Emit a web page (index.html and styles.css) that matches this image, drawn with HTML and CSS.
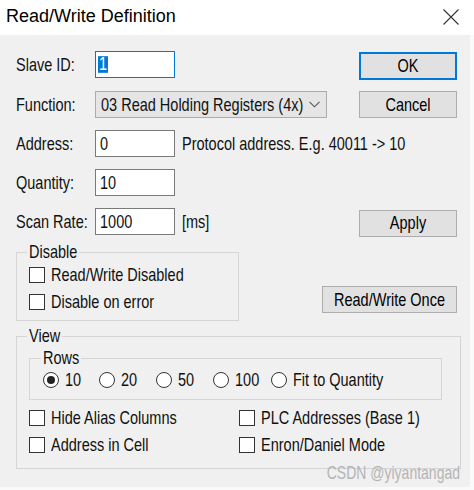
FILE: index.html
```html
<!DOCTYPE html>
<html lang="en">

<head>
    <meta charset="UTF-8">
    <title>Read/Write Definition</title>
    <link rel="stylesheet" href="styles.css">
</head>

<body>
    <div class="titlebar">
        <span class="title">Read/Write Definition</span>
        <svg class="close" width="16" height="16" viewBox="0 0 16 16">
            <path d="M0.5 0.5 L15.5 15.5 M15.5 0.5 L0.5 15.5" stroke="#333" stroke-width="1.1" fill="none" />
        </svg>
    </div>

    <div class="dialog">
        <div class="row first">
            <span class="lbl"><span class="t">Slave ID:</span></span>
            <div class="edit focus"><span class="selected t">1</span></div>
            <button class="btn default"><span class="t">OK</span></button>
        </div>
        <div class="row">
            <span class="lbl"><span class="t">Function:</span></span>
            <div class="combo">
                <span class="t">03 Read Holding Registers (4x)</span>
                <svg width="11" height="7" viewBox="0 0 11 7">
                    <polyline points="0.5,0.8 5.5,5.8 10.5,0.8" stroke="#555" stroke-width="1.1" fill="none" />
                </svg>
            </div>
            <button class="btn"><span class="t">Cancel</span></button>
        </div>
        <div class="row">
            <span class="lbl"><span class="t">Address:</span></span>
            <div class="edit"><span class="t">0</span></div>
            <span class="hint t">Protocol address. E.g. 40011 -&gt; 10</span>
        </div>
        <div class="row">
            <span class="lbl"><span class="t">Quantity:</span></span>
            <div class="edit"><span class="t">10</span></div>
        </div>
        <div class="row">
            <span class="lbl"><span class="t">Scan Rate:</span></span>
            <div class="edit"><span class="t">1000</span></div>
            <span class="hint t">[ms]</span>
            <button class="btn apply"><span class="t">Apply</span></button>
        </div>

        <div class="disable-row">
            <fieldset class="group disable">
                <legend><span class="t">Disable</span></legend>
                <label class="check"><span class="box"></span><span class="t">Read/Write Disabled</span></label>
                <label class="check"><span class="box"></span><span class="t">Disable on error</span></label>
            </fieldset>
            <button class="btn once"><span class="t">Read/Write Once</span></button>
        </div>

        <fieldset class="group view">
            <legend><span class="t">View</span></legend>
            <fieldset class="group rows">
                <legend><span class="t">Rows</span></legend>
                <div class="radios">
                    <label class="radio"><span class="dot on"></span><span class="t">10</span></label>
                    <label class="radio"><span class="dot"></span><span class="t">20</span></label>
                    <label class="radio"><span class="dot"></span><span class="t">50</span></label>
                    <label class="radio"><span class="dot"></span><span class="t">100</span></label>
                    <label class="radio"><span class="dot"></span><span class="t">Fit to Quantity</span></label>
                </div>
            </fieldset>
            <div class="options">
                <label class="check"><span class="box"></span><span class="t">Hide Alias Columns</span></label>
                <label class="check"><span class="box"></span><span class="t">PLC Addresses (Base 1)</span></label>
                <label class="check"><span class="box"></span><span class="t">Address in Cell</span></label>
                <label class="check"><span class="box"></span><span class="t">Enron/Daniel Mode</span></label>
            </div>
        </fieldset>

        <div class="watermark t">CSDN @yiyantangad</div>
    </div>
</body>

</html>
```

FILE: styles.css
```css
:root {
    --face: #f0f0f0;
    --btn-face: #e1e1e1;
    --btn-border: #adadad;
    --accent: #0078d7;
    --group-line: #d5d5d5;
}

body {
    margin: 0;
    background: #fafafa;
    font-family: 'Liberation Sans', Arial, sans-serif;
    font-size: 14.5px;
    color: #111;
}

/* the dialog font is narrow and tall, so stretch glyphs vertically */
.t {
    display: inline-block;
    transform: scaleY(1.28);
}

.titlebar {
    height: 35px;
    background: white;
    display: flex;
    align-items: center;
    justify-content: space-between;
    padding: 0 15px 0 6px;
}

.title {
    font-size: 18px;
    color: #000;
    margin-top: -2px;
}

.close {
    margin-top: -2px;
}

.dialog {
    position: relative;
    width: 470px;
    height: 452px;
    box-sizing: border-box;
    background: var(--face);
    padding: 16px 13px 0 16px;
}

.row {
    display: flex;
    align-items: center;
    height: 27px;
    margin-bottom: 12px;
}

.row.first {
    margin-bottom: 13px;
}

.lbl {
    width: 79px;
}

.edit {
    width: 80px;
    height: 27px;
    box-sizing: border-box;
    background: white;
    border: 1px solid #7a7a7a;
    padding: 0 4px;
    display: flex;
    align-items: center;
}

.edit.focus {
    border-color: var(--accent);
    padding-left: 2px;
}

.selected {
    background: var(--accent);
    color: white;
    line-height: 13px;
    padding: 0 1px;
}

.hint {
    margin-left: 7px;
}

.combo {
    width: 232px;
    height: 27px;
    box-sizing: border-box;
    background: #e5e5e5;
    border: 1px solid #acacac;
    display: flex;
    align-items: center;
    justify-content: space-between;
    padding: 0 6px 0 5px;
}

.btn {
    font: inherit;
    color: #000;
    background: var(--btn-face);
    border: 1px solid var(--btn-border);
    height: 27px;
    width: 98px;
    padding: 0;
    margin-left: auto;
}

.btn.default {
    border: 2px solid var(--accent);
    height: 28px;
    margin-top: 2px;
}

.btn.apply {
    margin-top: 3px;
}

.disable-row {
    display: flex;
    align-items: flex-end;
    margin-top: -3px;
}

.group {
    margin: 0;
    padding: 0 0 0 12px;
    border: 1px solid var(--group-line);
    min-width: 0;
}

.group legend {
    padding: 0 2px;
    margin-left: -2px;
    line-height: 17px;
}

.disable {
    width: 223px;
    box-sizing: border-box;
    padding-bottom: 5px;
}

.check {
    display: flex;
    align-items: center;
    height: 27px;
}

.box {
    width: 16px;
    height: 16px;
    box-sizing: border-box;
    border: 1px solid #333;
    background: white;
    margin-right: 6px;
}

.btn.once {
    width: 135px;
    margin-bottom: 8px;
}

.view {
    width: 445px;
    box-sizing: border-box;
    margin-top: 7px;
    padding-bottom: 10px;
}

.rows {
    width: 413px;
    box-sizing: border-box;
    margin-top: 5px;
    padding: 0 0 7px 13px;
}

.radios {
    display: grid;
    grid-template-columns: 56px 57px 57px 58px auto;
    height: 25px;
    align-items: center;
}

.radio {
    display: flex;
    align-items: center;
}

.dot {
    width: 16px;
    height: 16px;
    box-sizing: border-box;
    border: 1px solid #333;
    border-radius: 50%;
    background: white;
    margin-right: 6px;
    display: flex;
    align-items: center;
    justify-content: center;
}

.dot.on::after {
    content: "";
    width: 8px;
    height: 8px;
    border-radius: 50%;
    background: #222;
}

.options {
    display: grid;
    grid-template-columns: 210px auto;
    margin-top: 4px;
}

.watermark {
    position: absolute;
    right: 10px;
    bottom: 6px;
    color: #b4b4b4;
    font-size: 14px;
}
```
